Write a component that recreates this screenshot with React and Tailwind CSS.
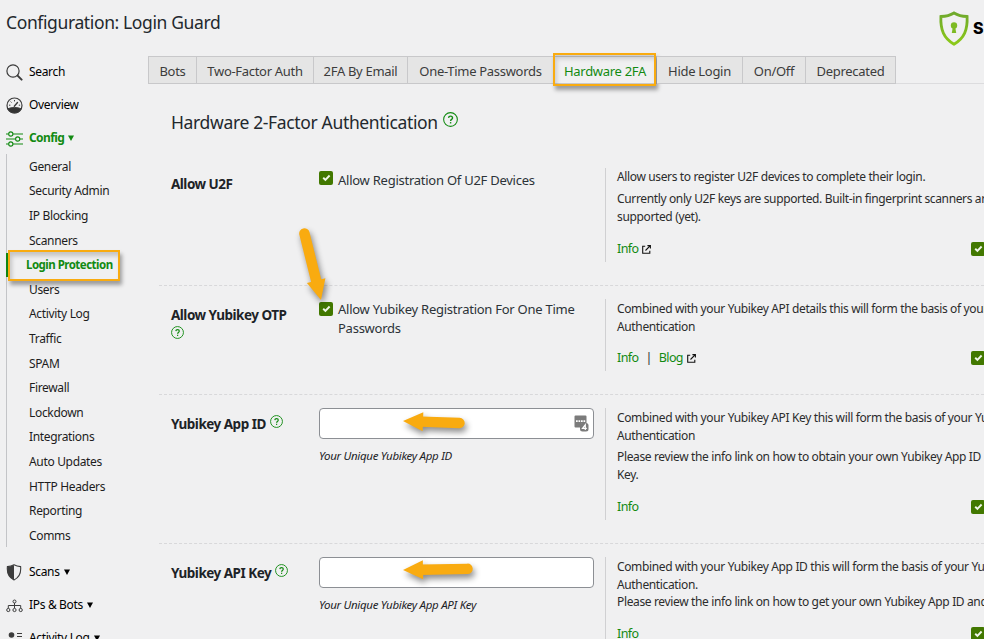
import clsx from "clsx";

const tabs = [
  { label: "Bots", width: "w-[49px]" },
  { label: "Two-Factor Auth", width: "w-[117px]" },
  { label: "2FA By Email", width: "w-[94px]" },
  { label: "One-Time Passwords", width: "w-[146px]" },
  { label: "Hardware 2FA", width: "w-[103px]", active: true },
  { label: "Hide Login", width: "w-[86px]" },
  { label: "On/Off", width: "w-[63px]" },
  { label: "Deprecated", width: "w-[90px]" },
];

const configItems = [
  "General",
  "Security Admin",
  "IP Blocking",
  "Scanners",
  "Login Protection",
  "Users",
  "Activity Log",
  "Traffic",
  "SPAM",
  "Firewall",
  "Lockdown",
  "Integrations",
  "Auto Updates",
  "HTTP Headers",
  "Reporting",
  "Comms",
];

const SearchIcon = () => (
  <svg width="17" height="17" viewBox="0 0 17 17" fill="none" stroke="#3c3c3c">
    <circle cx="7" cy="7" r="6.1" strokeWidth="1.2" />
    <path d="M11.6 11.6l4 4" strokeWidth="2" strokeLinecap="round" />
  </svg>
);

const GaugeIcon = () => (
  <svg width="17" height="17" viewBox="0 0 17 17" fill="none" stroke="#3c3c3c">
    <circle cx="8.5" cy="8.5" r="7.5" strokeWidth="1.2" />
    <path d="M1.8 11.7c4.2-1.6 9.2-1.6 13.4 0a7.4 7.4 0 0 1-13.4 0z" fill="#333" />
    <path d="M8.3 9.3l3.2-3.8" strokeWidth="1.4" strokeLinecap="round" />
    <path d="M8.5 3v1.4M4.6 4.6l.9.9M3 8.2h1.4M12.8 8.2h1.3" strokeWidth="1" />
  </svg>
);

const SlidersIcon = () => (
  <svg width="17" height="16" viewBox="0 0 17 16" fill="none" stroke="#128a12" strokeWidth="1.1">
    <path d="M0 3h2.7M7 3h10M0 8h9.5M13.8 8H17M0 13h2.7M7 13h10" />
    <circle cx="4.8" cy="3" r="2.1" />
    <circle cx="11.7" cy="8" r="2.1" />
    <circle cx="4.8" cy="13" r="2.1" />
  </svg>
);

const ShieldIcon = () => (
  <svg width="16" height="17" viewBox="0 0 16 17" stroke="#3c3c3c">
    <path
      d="M8 .8C5.8 2 3.4 2.5 1.4 2.6c-.6 5.8 1 10.8 6.6 13.4 5.6-2.6 7.2-7.6 6.6-13.4C12.6 2.5 10.2 2 8 .8z"
      fill="none"
      strokeWidth="1.1"
    />
    <path d="M8 1v15C2.4 13.4.8 8.4 1.4 2.6 3.4 2.5 5.8 2 8 1z" fill="#3c3c3c" stroke="none" />
  </svg>
);

const NetworkIcon = () => (
  <svg width="17" height="14" viewBox="0 0 17 14" fill="none" stroke="#3c3c3c">
    <circle cx="8.5" cy="2.5" r="1.5" />
    <path d="M8.5 4v5M2.3 9V6.5h12.4V9" />
    <circle cx="2.3" cy="11" r="1.6" />
    <circle cx="8.5" cy="11" r="1.6" />
    <circle cx="14.7" cy="11" r="1.6" />
  </svg>
);

const ListIcon = () => (
  <svg width="17" height="16" viewBox="0 0 17 16" stroke="#3c3c3c" strokeWidth="1.2">
    <circle cx="5.5" cy="4" r="2.8" fill="#3c3c3c" stroke="none" />
    <path d="M11 2.5h5M11 5.5h5M11 11h5M11 14h5" />
    <circle cx="5.5" cy="12.5" r="2.4" fill="none" />
  </svg>
);

const HelpIcon = ({ size = 13 }) => (
  <svg width={size} height={size} viewBox="0 0 14 14" fill="none" stroke="#128a12">
    <circle cx="7" cy="7" r="6.4" strokeWidth="1" />
    <path d="M5.2 5.5c.1-2.3 3.7-2.2 3.7 0 0 1.4-1.8 1.4-1.8 2.8" strokeWidth="1.3" />
    <path d="M7.1 9.4v1.3" strokeWidth="1.3" />
  </svg>
);

const ExternalIcon = () => (
  <svg width="9" height="9" viewBox="0 0 9 9" fill="none" stroke="#111" strokeWidth="1.1">
    <path d="M3.2 1.2H.7v7.1h7.1V5.7" />
    <path d="M5.4.6h3v3M8.3.7L3.5 5.5" />
  </svg>
);

const Checkbox = () => (
  <svg className="shrink-0" width="14" height="14" viewBox="0 0 14 14">
    <rect width="14" height="14" rx="2" fill="#427800" />
    <path d="M4.2 6.7l2.2 2.1 4.2-4.3" fill="none" stroke="#f0f6e8" strokeWidth="1.9" />
  </svg>
);

const PasswordIcon = () => (
  <svg width="15" height="17" viewBox="0 0 15 17">
    <path d="M1.5.5h10a1 1 0 0 1 1 1v7H7.5v4h-6a1 1 0 0 1-1-1v-10a1 1 0 0 1 1-1z" fill="#7b7b7b" />
    <path d="M2 6.2h9.5" stroke="#fff" strokeWidth="1.7" strokeDasharray="1.7 .8" />
    <rect x="6" y="8" width="8.5" height="8.5" rx="2.5" fill="#7b7b7b" />
    <path d="M11.3 15v-5.2L8.5 13.3h4.3" fill="none" stroke="#fff" strokeWidth="1.2" />
  </svg>
);

const LogoShield = () => (
  <svg width="30" height="36" viewBox="0 0 30 36">
    <defs>
      <linearGradient id="shield" x1="0" x2="0" y1="0" y2="1">
        <stop offset="0" stopColor="#6fa92c" />
        <stop offset="1" stopColor="#8cc919" />
      </linearGradient>
    </defs>
    <path
      d="M15 2C11 4.5 6.3 5.4 1.9 5.5c-.6 13.3 2.800 21.700 13.100 27.700 10.300-6 13.700-14.400 13.100-27.700C23.700 5.400 19 4.500 15 2z"
      fill="none"
      stroke="url(#shield)"
      strokeWidth="2.8"
    />
    <circle cx="15" cy="14.500" r="3.200" fill="#7dba23" />
    <path d="M13.8 16h2.4l1 6h-4.400z" fill="#7dba23" />
  </svg>
);

const Arrow = ({ className, length, angle }) => (
  <svg
    className={clsx("pointer-events-none absolute overflow-visible drop-shadow-[2px_4px_3px_rgba(0,0,0,0.45)]", className)}
    width="1"
    height="1"
  >
    <g transform={`rotate(${angle})`} fill="#f9ab10">
      <path d="M0 0L20-9.5V9.5z" />
      <path d={`M18 0H${length - 5.5}`} stroke="#f9ab10" strokeWidth="10.5" strokeLinecap="round" />
    </g>
  </svg>
);

const NavItem = ({ icon, label, caret, active }) => (
  <div className="flex h-[33px] items-center pb-px whitespace-nowrap">
    <span className="flex w-[23px] items-center pt-px">{icon}</span>
    <span className={clsx("text-[12px]", active ? "font-bold tracking-[-0.6px] text-[#128a12]" : "tracking-[-0.33px] text-black")}>
      {label}
    </span>
    {caret && (
      <svg className={clsx("ml-[4px]", active ? "text-[#128a12]" : "text-black")} width="6" height="6" viewBox="0 0 6 6">
        <path d="M0 .5h6L3 6z" fill="currentColor" />
      </svg>
    )}
  </div>
);

const Sidebar = () => (
  <aside className="w-[148px] shrink-0 pl-[6px]">
    <NavItem icon={<SearchIcon />} label="Search" />
    <NavItem icon={<GaugeIcon />} label="Overview" />
    <NavItem icon={<SlidersIcon />} label="Config" caret active />
    <ul className="-mt-px mb-[9px] h-[393px] border-l border-[#c3c4c7] pt-[0.5px]">
      {configItems.map((item) =>
        item === "Login Protection" ? (
          <li key={item} className="relative flex h-[24.6px] items-center pl-[19px]">
            <span className="absolute top-0 -left-px h-[24px] w-[3px] bg-[#128a12]" />
            <span className="absolute top-[-3px] left-[1px] h-[31px] w-[112px] border-2 border-[#f9ab10] shadow-[2px_4px_4px_rgba(0,0,0,0.35),inset_2px_4px_4px_rgba(0,0,0,0.18)]" />
            <span className="relative -top-px text-[11.5px] font-bold tracking-[-0.52px] whitespace-nowrap text-[#128a12]">{item}</span>
          </li>
        ) : (
          <li key={item} className="flex h-[24.6px] items-center pl-[22px] text-[12px] tracking-[-0.33px] text-[#1d1d1d]">
            {item}
          </li>
        )
      )}
    </ul>
    <NavItem icon={<ShieldIcon />} label="Scans" caret />
    <NavItem icon={<NetworkIcon />} label="IPs & Bots" caret />
    <NavItem icon={<ListIcon />} label="Activity Log" caret />
  </aside>
);

const TabBar = () => (
  <nav className="flex h-[28px] border-b border-[#dcdcde]">
    {tabs.map((tab, i) => (
      <div
        key={tab.label}
        className={clsx(
          "relative flex h-[28px] shrink-0 items-center justify-center border-t border-b border-[#c8c8ca] pt-[3px] text-[13px] tracking-[-0.3px] whitespace-nowrap",
          tab.width,
          i === 0 ? "border-x" : "border-r",
          tab.active ? "bg-[#f0f0f1] text-[#128a12]" : "bg-[#e5e5e5] text-[#3c3c3c]"
        )}
      >
        {tab.label}
        {tab.active && (
          <span className="absolute -top-[4px] -left-px h-[33px] w-[103px] border-2 border-[#f9ab10] shadow-[2px_4px_4px_rgba(0,0,0,0.35),inset_2px_4px_4px_rgba(0,0,0,0.15)]" />
        )}
      </div>
    ))}
  </nav>
);

const OptionRow = ({ className, label, help, helpBelow, control, lines, links }) => (
  <div className={clsx("ml-[11px] flex border-b border-dashed border-[#d8d8da] pt-[13px] pb-[23px]", className)}>
    <div className="w-[160px] shrink-0 pt-[6px] pl-[12px] text-[13.5px] leading-[20px] font-bold tracking-[-0.5px] whitespace-nowrap text-[#1d2327]">
      <span>{label}</span>
      {help && <span className="ml-[4px] inline-block align-[1px]"><HelpIcon /></span>}
      {helpBelow && <div className="mt-px"><HelpIcon /></div>}
    </div>
    <div className="w-[286px] shrink-0">{control}</div>
    <div className="flex min-w-0 flex-1 flex-col justify-between border-l border-[#d0d0d2] pl-[11px] text-[12px] tracking-[-0.36px] whitespace-nowrap text-[#2c2c2c]">
      <div>
        {lines.map((line) => (
          <p key={line.text} className={clsx("leading-[18px]", line.gap)}>{line.text}</p>
        ))}
      </div>
      <div className="flex h-[22px] items-start justify-between">
        <div className="flex items-center text-[12.5px] leading-[18px] tracking-[-0.6px] text-[#128a12]">{links}</div>
        <span className="-mr-px pt-[2px]"><Checkbox /></span>
      </div>
    </div>
  </div>
);

const TextField = ({ hint, children }) => (
  <div>
    <div className="relative flex h-[31px] w-[275px] items-center justify-end rounded-[4px] border border-[#8c8f94] bg-white pr-[4px]">
      {children}
    </div>
    <p className="mt-[8px] text-[11.5px] leading-[18px] tracking-[-0.3px] text-[#1d2327] italic">{hint}</p>
  </div>
);

const App = () => {
  return (
    <div className="h-[639px] w-[984px] overflow-hidden bg-[#f0f0f1] font-['Noto_Sans','Open_Sans',sans-serif]">
      <header className="flex h-[56px] items-start justify-between pl-[6px]">
        <h1 className="pt-[8px] text-[17.5px] leading-[28px] tracking-[-0.38px] text-[#23282d]">Configuration: Login Guard</h1>
        <div className="flex w-[45px] items-start overflow-hidden pt-[11px]">
          <span className="shrink-0"><LogoShield /></span>
          <span className="ml-[4px] font-[Inter,sans-serif] text-[16px] leading-[34px] font-extrabold text-black">S</span>
        </div>
      </header>

      <div className="flex">
        <Sidebar />
        <main className="w-[836px] shrink-0">
          <TabBar />
          <h2 className="flex h-[71px] items-start pt-[24px] pl-[23px] text-[17.5px] leading-[28px] tracking-[-0.35px] text-[#23282d]">
            Hardware 2-Factor Authentication
            <span className="mt-[4px] ml-[5px]"><HelpIcon size={15} /></span>
          </h2>

          <OptionRow
            className="h-[131px]"
            label="Allow U2F"
            control={
              <div className="flex items-start pt-[3px] text-[13px] leading-[19px] tracking-[-0.25px] text-[#2c3338]">
                <Checkbox />
                <span className="ml-[5px]">Allow Registration Of U2F Devices</span>
              </div>
            }
            lines={[
              { text: "Allow users to register U2F devices to complete their login." },
              { text: "Currently only U2F keys are supported. Built-in fingerprint scanners are", gap: "mt-[4px]" },
              { text: "supported (yet)." },
            ]}
            links={<><span>Info</span><span className="ml-[4px]"><ExternalIcon /></span></>}
          />

          <OptionRow
            className="h-[109px]"
            label="Allow Yubikey OTP"
            helpBelow
            control={
              <div className="relative flex items-start pt-[3px] text-[13px] leading-[19px] tracking-[-0.25px] text-[#2c3338]">
                <Checkbox />
                <span className="-mt-[2px] ml-[5px]">Allow Yubikey Registration For One Time<br />Passwords</span>
                <Arrow className="top-[1px] left-[2px]" length={74} angle={-104} />
              </div>
            }
            lines={[
              { text: "Combined with your Yubikey API details this will form the basis of your", gap: "mt-px" },
              { text: "Authentication" },
            ]}
            links={
              <>
                <span>Info</span>
                <span className="mx-[7px] text-[#2c2c2c]">|</span>
                <span>Blog</span>
                <span className="ml-[4px]"><ExternalIcon /></span>
              </>
            }
          />

          <OptionRow
            className="h-[149px]"
            label="Yubikey App ID"
            help
            control={
              <TextField hint="Your Unique Yubikey App ID">
                <Arrow className="top-[12px] left-[83px]" length={62} angle={2} />
                <PasswordIcon />
              </TextField>
            }
            lines={[
              { text: "Combined with your Yubikey API Key this will form the basis of your Yubikey", gap: "mt-px" },
              { text: "Authentication" },
              { text: "Please review the info link on how to obtain your own Yubikey App ID", gap: "mt-[3px]" },
              { text: "Key." },
            ]}
            links={<span>Info</span>}
          />

          <OptionRow
            className="h-[127px]"
            label="Yubikey API Key"
            help
            control={
              <TextField hint="Your Unique Yubikey App API Key">
                <Arrow className="top-[12px] left-[83px]" length={70} angle={-1} />
              </TextField>
            }
            lines={[
              { text: "Combined with your Yubikey App ID this will form the basis of your Yubikey", gap: "mt-px" },
              { text: "Authentication." },
              { text: "Please review the info link on how to get your own Yubikey App ID and", gap: "-mt-px" },
            ]}
            links={<span>Info</span>}
          />
        </main>
      </div>
    </div>
  );
};

export default App;
